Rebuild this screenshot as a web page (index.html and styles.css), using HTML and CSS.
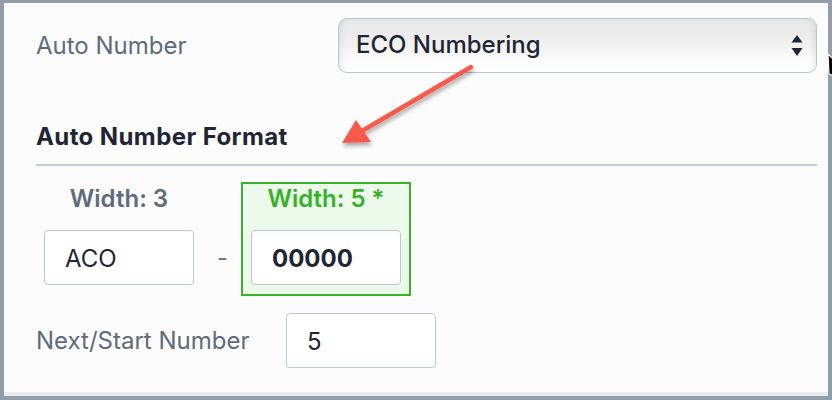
FILE: index.html
```html
<!DOCTYPE html>
<html lang="en">
<head>
  <meta charset="UTF-8" />
  <title>Auto Number Settings</title>
  <link rel="stylesheet" href="styles.css">
</head>
<body>
  <div class="frame">
    <div class="panel">
      <!-- Auto number picker -->
      <div class="field-row">
        <label class="field-label" for="autonum">Auto Number</label>
        <div class="select-wrap">
          <select id="autonum" class="select">
            <option>ECO Numbering</option>
          </select>
          <svg class="select-arrows" width="12" height="22" viewBox="0 0 12 22">
            <polygon points="6,0 11.5,7.5 0.5,7.5" fill="#1f2633"/>
            <polygon points="0.5,13 11.5,13 6,21" fill="#1f2633"/>
          </svg>
        </div>
      </div>

      <h3 class="section-title">Auto Number Format</h3>

      <!-- Format segments -->
      <div class="format-row">
        <div class="segment">
          <div class="segment-label">Width: 3</div>
          <input class="text-input" type="text" value="ACO">
        </div>
        <div class="separator">-</div>
        <div class="segment active">
          <div class="segment-label">Width: 5 *</div>
          <input class="text-input bold" type="text" value="00000">
        </div>
      </div>

      <div class="field-row next-row">
        <label class="field-label next-label">Next/Start Number</label>
        <input class="text-input" type="text" value="5">
      </div>
    </div>
  </div>

  <!-- annotation arrow + mouse pointer drawn over the screenshot -->
  <svg class="overlay" width="832" height="400" viewBox="0 0 832 400">
    <defs>
      <filter id="shadow" x="-20%" y="-20%" width="140%" height="140%">
        <feDropShadow dx="1" dy="3" stdDeviation="2" flood-color="#000" flood-opacity="0.35"/>
      </filter>
    </defs>
    <g filter="url(#shadow)">
      <line x1="471" y1="67" x2="362" y2="131" stroke="#f75a4b" stroke-width="4.5" stroke-linecap="round"/>
      <polygon points="342,143 356,120 371,142" fill="#f75a4b"/>
    </g>
    <polygon points="828,54 834,60 834,76 829,74" fill="#000" stroke="#fff" stroke-width="1.2"/>
  </svg>
</body>
</html>
```

FILE: styles.css
```css
body {
  margin: 0;
  font-family: Inter, 'Open Sans', sans-serif;
  background: #939fa8;
}

.frame {
  width: 832px;
  height: 400px;
  box-sizing: border-box;
  border-style: solid;
  border-color: #939fa8;
  border-width: 3px 4px 4px 4px;
  overflow: hidden;
}

.panel {
  height: 100%;
  box-sizing: border-box;
  background: #fcfcfc;
  border-bottom: 4px solid #e9ebef;
  padding: 15px 11px 0 32px;
}

.field-row {
  display: flex;
  align-items: center;
}

.field-label {
  width: 302px;
  flex-shrink: 0;
  font-size: 24px;
  color: #5e6b7b;
}

.select-wrap {
  position: relative;
  flex: 1;
}

.select {
  appearance: none;
  -webkit-appearance: none;
  width: 100%;
  height: 55px;
  box-sizing: border-box;
  border: 1.5px solid #b9c5d1;
  border-radius: 9px;
  padding: 0 40px 2px 17px;
  font-family: inherit;
  font-size: 24px;
  font-weight: 500;
  color: #1f2633;
  background: linear-gradient(#e7e7e7, #efefef 45%, #fdfdfd 80%, #fff);
  box-shadow: inset 7px 0 6px -5px rgba(0,0,0,0.08), inset -7px 0 6px -5px rgba(0,0,0,0.08);
}

.select-arrows {
  position: absolute;
  right: 14px;
  top: 17px;
}

.section-title {
  margin: 49px 0 0 0;
  font-size: 24px;
  line-height: 30px;
  font-weight: 700;
  letter-spacing: 0.4px;
  color: #1f2533;
  padding-bottom: 12px;
  border-bottom: 2px solid #c2cdd8;
}

.format-row {
  display: flex;
  margin: 16px 0 0 -2px;
}

.segment {
  border: 2px solid transparent;
  padding: 2px 8px 9px;
  text-align: center;
}

.segment.active {
  border-color: #37b42a;
  background: #edf9ea;
}

.segment-label {
  font-size: 24px;
  line-height: 26px;
  font-weight: 600;
  color: #5e6b7b;
  margin-bottom: 18px;
}

.active .segment-label {
  color: #35b226;
}

.separator {
  width: 37px;
  align-self: flex-end;
  text-align: center;
  font-size: 24px;
  line-height: 55px;
  margin-bottom: 11px;
  color: #6b7785;
}

.text-input {
  display: block;
  width: 150px;
  height: 55px;
  box-sizing: border-box;
  border: 1.5px solid #bcc7d2;
  border-radius: 4px;
  background: #fff;
  padding: 2px 0 0 20px;
  font-family: inherit;
  font-size: 24px;
  color: #1f2533;
  outline: none;
}

.text-input.bold {
  font-weight: 700;
}

.next-row {
  margin-top: 17px;
}

.next-label {
  width: 250px;
}

.overlay {
  position: absolute;
  left: 0;
  top: 0;
  pointer-events: none;
}
```
